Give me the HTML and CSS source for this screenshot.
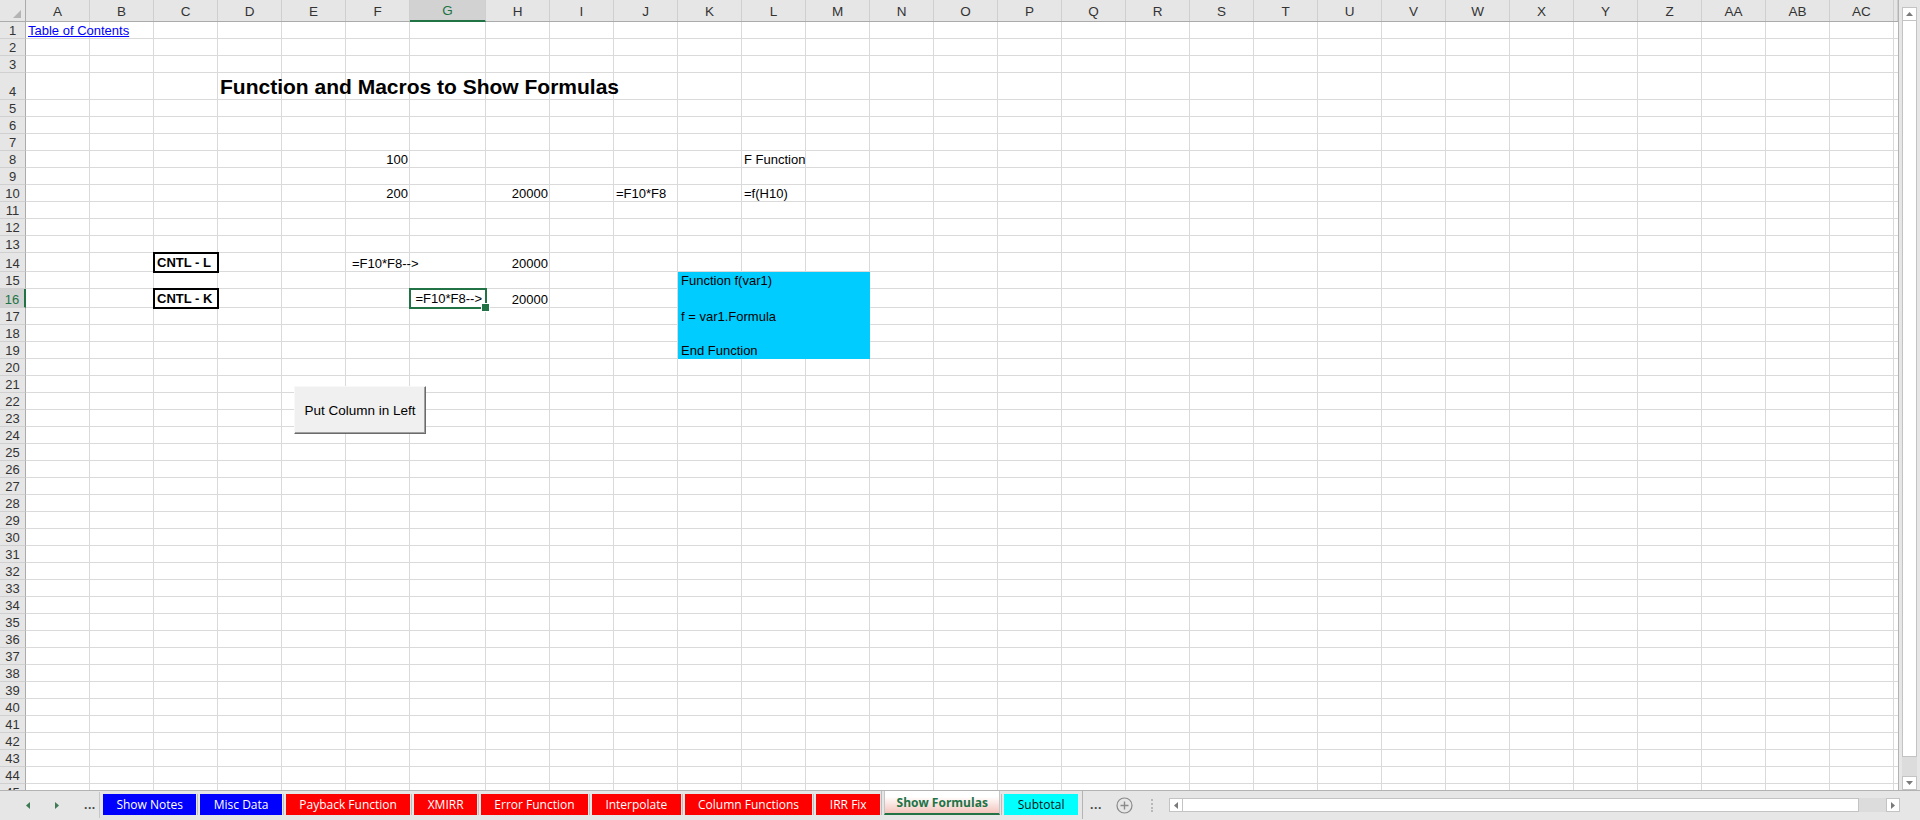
FILE: index.html
```html
<!DOCTYPE html>
<html>
<head>
<meta charset="utf-8">
<title>Show Formulas</title>
<link rel="stylesheet" href="styles.css">
</head>
<body>
<div class="app">
  <div class="main">
    <div class="sheet">
      <div class="colhdr">
        <div class="corner"><svg width="8" height="8" viewBox="0 0 8 8"><path d="M8 0L8 8L0 8Z" fill="#b4b4b4"/></svg></div>
        <div class="ch">A</div><div class="ch">B</div><div class="ch">C</div><div class="ch">D</div><div class="ch">E</div><div class="ch">F</div><div class="ch sel-h">G</div><div class="ch">H</div><div class="ch">I</div><div class="ch">J</div><div class="ch">K</div><div class="ch">L</div><div class="ch">M</div><div class="ch">N</div><div class="ch">O</div><div class="ch">P</div><div class="ch">Q</div><div class="ch">R</div><div class="ch">S</div><div class="ch">T</div><div class="ch">U</div><div class="ch">V</div><div class="ch">W</div><div class="ch">X</div><div class="ch">Y</div><div class="ch">Z</div><div class="ch">AA</div><div class="ch">AB</div><div class="ch">AC</div><div class="ch"></div>
      </div>
      <div class="row"><div class="rh">1</div><div class="c cA"><a class="link" href="#">Table of Contents</a></div></div>
      <div class="row"><div class="rh">2</div></div>
      <div class="row"><div class="rh">3</div></div>
      <div class="row tall"><div class="rh">4</div><div class="c cD title">Function and Macros to Show Formulas</div></div>
      <div class="row"><div class="rh">5</div></div>
      <div class="row"><div class="rh">6</div></div>
      <div class="row"><div class="rh">7</div></div>
      <div class="row"><div class="rh">8</div><div class="c cF num">100</div><div class="c cL">F Function</div></div>
      <div class="row"><div class="rh">9</div></div>
      <div class="row"><div class="rh">10</div><div class="c cF num">200</div><div class="c cH num">20000</div><div class="c cJ">=F10*F8</div><div class="c cL">=f(H10)</div></div>
      <div class="row"><div class="rh">11</div></div>
      <div class="row"><div class="rh">12</div></div>
      <div class="row"><div class="rh">13</div></div>
      <div class="row mid"><div class="rh">14</div><div class="c cC boxed">CNTL - L</div><div class="c cF ind">=F10*F8--&gt;</div><div class="c cH num">20000</div></div>
      <div class="row"><div class="rh">15</div><div class="c blue">Function f(var1)</div></div>
      <div class="row mid"><div class="rh sel-r">16</div><div class="c cC boxed">CNTL - K</div><div class="c cG num sel">=F10*F8--&gt;</div><div class="c cH num">20000</div><div class="c blue"></div></div>
      <div class="row"><div class="rh">17</div><div class="c blue">f = var1.Formula</div></div>
      <div class="row"><div class="rh">18</div><div class="c blue"></div></div>
      <div class="row"><div class="rh">19</div><div class="c blue">End Function</div></div>
      <div class="row"><div class="rh">20</div></div>
      <div class="row"><div class="rh">21</div></div>
      <div class="row"><div class="rh">22</div></div>
      <div class="row"><div class="rh">23</div></div>
      <div class="row"><div class="rh">24</div></div>
      <div class="row"><div class="rh">25</div></div>
      <div class="row"><div class="rh">26</div></div>
      <div class="row"><div class="rh">27</div></div>
      <div class="row"><div class="rh">28</div></div>
      <div class="row"><div class="rh">29</div></div>
      <div class="row"><div class="rh">30</div></div>
      <div class="row"><div class="rh">31</div></div>
      <div class="row"><div class="rh">32</div></div>
      <div class="row"><div class="rh">33</div></div>
      <div class="row"><div class="rh">34</div></div>
      <div class="row"><div class="rh">35</div></div>
      <div class="row"><div class="rh">36</div></div>
      <div class="row"><div class="rh">37</div></div>
      <div class="row"><div class="rh">38</div></div>
      <div class="row"><div class="rh">39</div></div>
      <div class="row"><div class="rh">40</div></div>
      <div class="row"><div class="rh">41</div></div>
      <div class="row"><div class="rh">42</div></div>
      <div class="row"><div class="rh">43</div></div>
      <div class="row"><div class="rh">44</div></div>
      <div class="row"><div class="rh">45</div></div>
      <button class="macro-btn" type="button">Put Column in Left</button>
    </div>
    <div class="vscroll">
      <div class="sbtn"><svg width="7" height="4" viewBox="0 0 7 4"><path d="M0 4L3.5 0L7 4Z" fill="#7a7a7a"/></svg></div>
      <div class="vthumb"></div>
      <div class="vtrack"></div>
      <div class="sbtn"><svg width="7" height="4" viewBox="0 0 7 4"><path d="M0 0L7 0L3.5 4Z" fill="#7a7a7a"/></svg></div>
    </div>
  </div>
  <div class="tabbar">
    <div class="nav">
      <span class="navarr"><svg width="4" height="7" viewBox="0 0 4 7"><path d="M4 0L0 3.5L4 7Z" fill="#3d7a55"/></svg></span>
      <span class="navarr"><svg width="4" height="7" viewBox="0 0 4 7"><path d="M0 0L4 3.5L0 7Z" fill="#3d7a55"/></svg></span>
      <span class="dots">...</span>
    </div>
    <div class="tabs">
      <span class="tab blue-t">Show Notes</span>
      <span class="tab blue-t">Misc Data</span>
      <span class="tab red-t">Payback Function</span>
      <span class="tab red-t">XMIRR</span>
      <span class="tab red-t">Error Function</span>
      <span class="tab red-t">Interpolate</span>
      <span class="tab red-t">Column Functions</span>
      <span class="tab red-t">IRR Fix</span>
      <span class="tab active">Show Formulas</span>
      <span class="tab cyan-t">Subtotal</span>
    </div>
    <div class="tools">
      <span class="dots more">...</span>
      <span class="add"><svg width="17" height="17" viewBox="0 0 17 17"><circle cx="8.5" cy="8.5" r="7.5" fill="none" stroke="#8a8a8a" stroke-width="1.2"/><path d="M8.5 4.5V12.5M4.5 8.5H12.5" stroke="#8a8a8a" stroke-width="1.4"/></svg></span>
      <span class="vdots"><svg width="2" height="13" viewBox="0 0 2 13"><rect x="0" y="0" width="2" height="2" fill="#b8b8b8"/><rect x="0" y="4" width="2" height="2" fill="#b8b8b8"/><rect x="0" y="8" width="2" height="2" fill="#b8b8b8"/><rect x="0" y="11" width="2" height="2" fill="#b8b8b8"/></svg></span>
      <div class="hscroll">
        <div class="sbtn h"><svg width="4" height="7" viewBox="0 0 4 7"><path d="M4 0L0 3.5L4 7Z" fill="#7a7a7a"/></svg></div>
        <div class="hthumb"></div>
        <div class="htrack"></div>
        <div class="sbtn h"><svg width="4" height="7" viewBox="0 0 4 7"><path d="M0 0L4 3.5L0 7Z" fill="#7a7a7a"/></svg></div>
      </div>
    </div>
  </div>
</div>
</body>
</html>
```
FILE: styles.css
```css
* { box-sizing: border-box; }
html, body { margin: 0; padding: 0; }
body {
  width: 1920px;
  height: 820px;
  overflow: hidden;
  background: #ffffff;
  font-family: "Liberation Sans", Arial, sans-serif;
  color: #000;
}
.app { display: flex; flex-direction: column; width: 1920px; height: 820px; }
.main { display: flex; height: 790px; }

.sheet {
  position: relative;
  flex: 0 0 1899px;
  height: 790px;
  overflow: hidden;
  border-right: 1px solid #b3b3b3;
}

.colhdr, .row {
  display: grid;
  grid-template-columns: 26px repeat(6, 64px) 76px repeat(22, 64px) 1fr;
}
.colhdr {
  height: 22px;
  background: #e6e6e6;
  border-bottom: 1px solid #ababab;
}
.corner {
  display: flex;
  align-items: flex-end;
  justify-content: flex-end;
  padding: 0 4px 3px 0;
  border-right: 1px solid #ababab;
}
.ch {
  display: flex;
  align-items: center;
  justify-content: center;
  border-right: 1px solid #cfcfcf;
  font-size: 13.5px;
  color: #333;
  padding-top: 1px;
}
.ch.sel-h {
  background: #d2d2d2;
  color: #217346;
  border-bottom: 2px solid #217346;
  margin-bottom: -1px;
}

.row {
  height: 17px;
  background-image:
    linear-gradient(to top, #dadada 1px, transparent 1px),
    repeating-linear-gradient(to right, transparent 0 63px, #dadada 63px 64px),
    linear-gradient(#dadada, #dadada),
    repeating-linear-gradient(to right, transparent 0 63px, #dadada 63px 64px);
  background-size: 100% 100%, 384px 100%, 1px 100%, 1408px 100%;
  background-position: 0 0, 26px 0, 485px 0, 486px 0;
  background-repeat: no-repeat;
}
.row.tall { height: 27px; }
.row.mid { height: 19px; }

.rh {
  grid-column: 1;
  background: #e6e6e6;
  border-right: 1px solid #ababab;
  border-bottom: 1px solid #d0d0d0;
  display: flex;
  align-items: flex-end;
  justify-content: center;
  font-size: 13px;
  line-height: 13px;
  color: #333;
  padding-bottom: 1px;
}
.rh.sel-r {
  background: #d2d2d2;
  color: #217346;
  border-right: 2px solid #217346;
}

.c {
  display: flex;
  align-items: flex-end;
  min-width: 0;
  padding: 0 2px 2px;
  font-size: 13px;
  line-height: 13px;
  white-space: nowrap;
}
.c.num { justify-content: flex-end; }
.c.ind { padding-left: 6px; }
.cA { grid-column: 2; }
.cC { grid-column: 4; }
.cD { grid-column: 5; }
.cF { grid-column: 7; }
.cG { grid-column: 8; }
.cH { grid-column: 9; }
.cJ { grid-column: 11; }
.cL { grid-column: 13; }

.link { color: #0000ff; text-decoration: underline; }
.title {
  font-size: 21px;
  line-height: 21px;
  font-weight: bold;
  padding-bottom: 3px;
}
.boxed {
  position: relative;
  outline: 2px solid #000;
  outline-offset: -1px;
  font-weight: bold;
  padding-left: 3px;
  padding-bottom: 3px;
}
.blue {
  grid-column: 12 / 15;
  background: #00ccff;
  padding-left: 3px;
}
.sel {
  position: relative;
  z-index: 1;
  outline: 2px solid #217346;
  outline-offset: -1px;
  padding-right: 4px;
  padding-bottom: 3px;
}
.sel::after {
  content: "";
  position: absolute;
  right: -4px;
  bottom: -4px;
  width: 7px;
  height: 7px;
  background: #217346;
  border: 1px solid #fff;
}

.macro-btn {
  position: absolute;
  left: 294px;
  top: 386px;
  width: 132px;
  height: 48px;
  margin: 0;
  padding: 0;
  background: #f0f0f0;
  border: 1px solid;
  border-color: #f8f8f8 #6b6b6b #6b6b6b #f8f8f8;
  box-shadow: inset -1px -1px 0 #a0a0a0;
  font-family: "Liberation Sans", Arial, sans-serif;
  font-size: 13.5px;
  color: #000;
}

.vscroll {
  flex: 1;
  display: flex;
  flex-direction: column;
  background: #e6e6e6;
  padding: 7px 3px 0 3px;
}
.sbtn {
  flex: 0 0 14px;
  height: 14px;
  background: #fff;
  border: 1px solid #c3c3c3;
  display: flex;
  align-items: center;
  justify-content: center;
}
.vthumb {
  flex: 1;
  background: #fff;
  border: 1px solid #c3c3c3;
  border-top: none;
}
.vtrack { flex: 0 0 19px; background: #dcdcdc; }

.tabbar {
  height: 30px;
  display: flex;
  align-items: flex-start;
  background: #e6e6e6;
  border-top: 1px solid #b3b3b3;
  font-family: "Open Sans", "Noto Sans", sans-serif;
  font-size: 12px;
}
.nav {
  flex: 0 0 100px;
  display: flex;
  align-items: center;
  height: 26px;
  padding-left: 26px;
  border-right: 1px solid #c6c6c6;
  margin-top: 1px;
}
.navarr { width: 29px; display: flex; align-items: center; }
.dots { color: #444; font-weight: bold; letter-spacing: 0.5px; line-height: 12px; }
.tabs {
  display: flex;
  gap: 4px;
  margin-left: 3px;
  margin-top: 3px;
}
.tab {
  height: 21px;
  display: flex;
  align-items: center;
  padding: 0 13.4px;
  white-space: nowrap;
}
.tab + .tab { box-shadow: -2px 0 0 #e6e6e6, -3px 0 0 #bdbdbd; }
.blue-t { background: #0000ff; color: #fff; }
.red-t { background: #ff0000; color: #fff; }
.cyan-t { background: #00ffff; color: #111; }
.tab.active {
  height: 24px;
  margin-top: -3px;
  padding: 0 11.5px;
  background: linear-gradient(to bottom, #ffffff 25%, #f4c4bc 100%);
  border-left: 1px solid #c6c6c6;
  border-right: 1px solid #c6c6c6;
  border-bottom: 2px solid #217346;
  color: #217346;
  font-weight: bold;
}
.tools {
  margin-left: auto;
  margin-right: 20px;
  display: flex;
  align-items: center;
  height: 28px;
  border-left: 1px solid #b5b5b5;
}
.more { width: 26px; text-align: center; }
.add { width: 30px; display: flex; justify-content: center; }
.vdots { width: 26px; display: flex; justify-content: center; margin-right: 4px; }
.hscroll {
  width: 731px;
  height: 14px;
  display: flex;
  align-self: flex-start;
  margin-top: 7px;
}
.sbtn.h { flex: 0 0 14px; }
.hthumb {
  flex: 1;
  background: #fff;
  border: 1px solid #c3c3c3;
  border-left: none;
}
.htrack { flex: 0 0 27px; background: #dcdcdc; }
```
